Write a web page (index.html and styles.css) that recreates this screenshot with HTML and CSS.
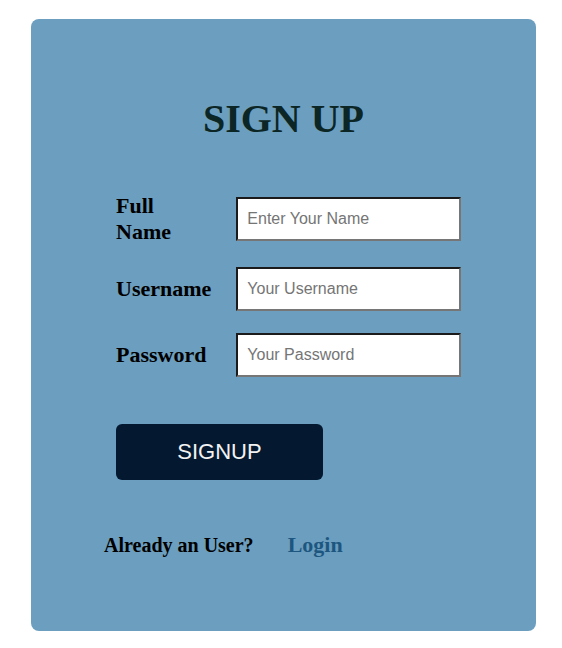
FILE: index.html
```html
<!DOCTYPE html>
<html>
<head>
<meta charset="utf-8">
<link rel="stylesheet" href="styles.css">
</head>
<body>
<div class="card">
  <h1 class="title">SIGN UP</h1>
  <form class="form">
    <div class="grid">
      <label class="label" for="name">Full Name</label>
      <input class="field" id="name" type="text" placeholder="Enter Your Name">
      <label class="label" for="user">Username</label>
      <input class="field" id="user" type="text" placeholder="Your Username">
      <label class="label" for="pass">Password</label>
      <input class="field" id="pass" type="password" placeholder="Your Password">
    </div>
    <button class="btn" type="button">SIGNUP</button>
  </form>
  <div class="footer">
    <span class="already">Already an User?</span>
    <a class="login" href="#">Login</a>
  </div>
</div>
</body>
</html>
```

FILE: styles.css
```css
html, body {
  margin: 0;
  padding: 0;
  background: #ffffff;
}
body {
  font-family: "Liberation Serif", "Times New Roman", serif;
}
.card {
  box-sizing: border-box;
  margin: 19px 0 0 31px;
  width: 505px;
  height: 612px;
  background: #6b9ebf;
  border-radius: 8px;
  padding-top: 77px;
  overflow: hidden;
}
.title {
  margin: 0;
  text-align: center;
  font-size: 40px;
  line-height: 46px;
  font-weight: bold;
  color: #0b2624;
}
.form {
  margin: 51px 0 0 85px;
}
.grid {
  display: grid;
  grid-template-columns: min-content 225px;
  column-gap: 25px;
  row-gap: 22px;
  align-items: center;
}
.label {
  font-size: 22px;
  line-height: 26px;
  font-weight: bold;
  color: #000;
}
.field {
  box-sizing: border-box;
  width: 225px;
  height: 44px;
  margin: 0;
  padding: 0 9px;
  font-family: "Liberation Sans", Arial, sans-serif;
  font-size: 16px;
  color: #000;
  background: #fff;
  border-style: solid;
  border-width: 2px;
  border-color: #1b1b1b #767676 #767676 #1b1b1b;
  outline: none;
}
.field::placeholder {
  color: #757575;
}
.btn {
  display: block;
  margin-top: 47px;
  width: 207px;
  height: 56px;
  border: none;
  border-radius: 6px;
  background: #041830;
  color: #f2f2f2;
  font-family: "Liberation Sans", Arial, sans-serif;
  font-size: 22px;
  cursor: pointer;
}
.footer {
  display: flex;
  align-items: baseline;
  gap: 34px;
  margin: 52px 0 0 73px;
}
.already {
  font-size: 20px;
  font-weight: bold;
  color: #000;
}
.login {
  font-size: 22px;
  font-weight: bold;
  color: #1d5780;
  text-decoration: none;
}
```
